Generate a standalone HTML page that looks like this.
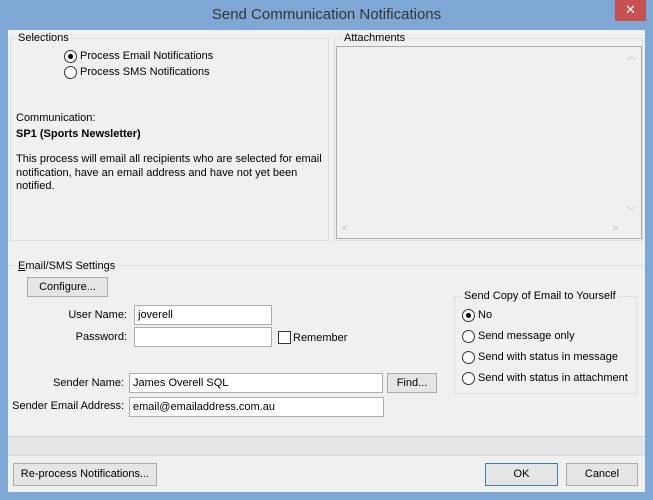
<!DOCTYPE html><html><head><style>
*{margin:0;padding:0;box-sizing:border-box}
body{width:653px;height:500px;background:#7fa7d6;font-family:"Liberation Sans",sans-serif;font-size:11px;color:#000;position:relative;overflow:hidden}
.a{position:absolute;white-space:nowrap}
.r{position:absolute;white-space:nowrap;text-align:right}
.client{position:absolute;left:8px;top:30px;width:637px;height:462px;background:#f0f0f0}
.grp{position:absolute;border:1px solid #dcdcdc}
.lbl{position:absolute;background:#f0f0f0;padding:0 3px}
.inp{position:absolute;background:#fff;border:1px solid #abadb3;padding:3px 3px;height:20px}
.btn{position:absolute;background:#e5e5e5;border:1px solid #acacac;text-align:center;line-height:18px}
.rad{position:absolute;width:13px;height:13px;border:1px solid #333;border-radius:50%;background:#fff}
.rad.on::after{content:"";position:absolute;left:3px;top:3px;width:5px;height:5px;border-radius:50%;background:#000}
</style></head><body>
<div class="a" style="left:0;top:6px;width:653px;text-align:center;font-size:15px;color:#333">Send Communication Notifications</div>
<div class="a" style="left:615px;top:0;width:31px;height:21px;background:#c75050;color:#fff;text-align:center;font-size:13px;line-height:20px">✕</div>
<div class="client"></div>
<div class="grp" style="left:10px;top:38px;width:319px;height:203px"></div>
<div class="lbl a" style="left:15px;top:32px">Selections</div>
<div class="rad on" style="left:64px;top:50px"></div><div class="a" style="left:80px;top:50px">Process Email Notifications</div>
<div class="rad" style="left:64px;top:66px"></div><div class="a" style="left:80px;top:66px">Process SMS Notifications</div>
<div class="a" style="left:16px;top:112px">Communication:</div>
<div class="a" style="left:16px;top:128px;font-weight:bold">SP1 (Sports Newsletter)</div>
<div class="a" style="left:16px;top:153px;line-height:13.5px;white-space:normal;width:312px">This process will email all recipients who are selected for email notification, have an email address and have not yet been notified.</div>
<div class="grp" style="left:334px;top:38px;width:309px;height:203px"></div>
<div class="lbl a" style="left:341px;top:32px">Attachments</div>
<div class="a" style="left:336px;top:46px;width:306px;height:193px;border:1px solid #adadad;background:#f0f0f0"></div>
<div class="a" style="left:627px;top:49px;color:#bbb;font-size:9px">︿</div>
<div class="a" style="left:627px;top:204px;color:#bbb;font-size:9px">﹀</div>
<div class="a" style="left:342px;top:223px;color:#bbb;font-size:10px">&lt;</div>
<div class="a" style="left:612px;top:223px;color:#bbb;font-size:10px">&gt;</div>
<div class="a" style="left:8px;top:265px;width:637px;border-top:1px solid #dcdcdc"></div>
<div class="lbl a" style="left:15px;top:260px"><u>E</u>mail/SMS Settings</div>
<div class="btn" style="left:27px;top:277px;width:81px;height:20px">Configure...</div>
<div class="r" style="right:526px;top:309px">User Name:</div>
<div class="inp" style="left:134px;top:305px;width:138px">joverell</div>
<div class="r" style="right:526px;top:331px">Password:</div>
<div class="inp" style="left:134px;top:327px;width:138px"></div>
<div class="a" style="left:278px;top:331px;width:13px;height:13px;border:1px solid #333;background:#fff"></div>
<div class="a" style="left:293px;top:332px">Remember</div>
<div class="r" style="right:529px;top:377px">Sender Name:</div>
<div class="inp" style="left:129px;top:373px;width:254px">James Overell SQL</div>
<div class="btn" style="left:387px;top:373px;width:50px;height:20px">Find...</div>
<div class="r" style="right:529px;top:400px">Sender Email Address:</div>
<div class="inp" style="left:129px;top:397px;width:255px">email@emailaddress.com.au</div>
<div class="grp" style="left:454px;top:296px;width:183px;height:98px"></div>
<div class="lbl a" style="left:461px;top:290px">Send Copy of Email to Yourself</div>
<div class="rad on" style="left:462px;top:309px"></div><div class="a" style="left:478px;top:309px">No</div>
<div class="rad" style="left:462px;top:330px"></div><div class="a" style="left:478px;top:330px">Send message only</div>
<div class="rad" style="left:462px;top:351px"></div><div class="a" style="left:478px;top:351px">Send with status in message</div>
<div class="rad" style="left:462px;top:372px"></div><div class="a" style="left:478px;top:372px">Send with status in attachment</div>
<div class="a" style="left:8px;top:436px;width:637px;height:20px;background:#e5e5e5;border-top:1px solid #d0d0d0;border-bottom:1px solid #d8d8d8"></div>
<div class="btn" style="left:13px;top:463px;width:144px;height:23px;line-height:21px">Re-process Notifications...</div>
<div class="btn" style="left:485px;top:463px;width:73px;height:23px;line-height:21px;border-color:#3c7fb1">OK</div>
<div class="btn" style="left:566px;top:463px;width:72px;height:23px;line-height:21px">Cancel</div>
</body></html>
